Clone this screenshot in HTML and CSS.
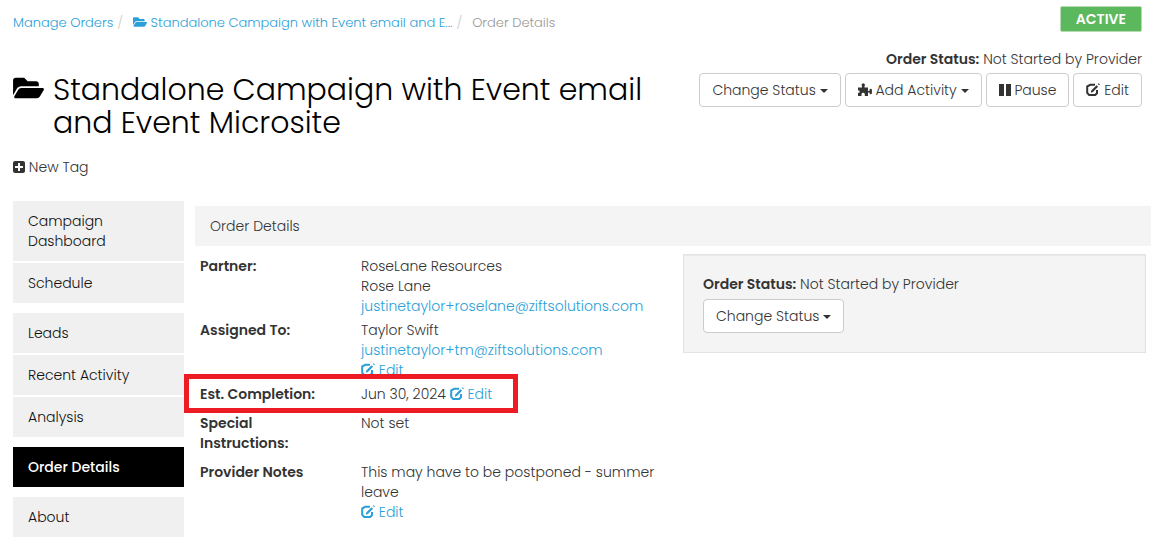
FILE: index.html
```html
<!DOCTYPE html>
<html lang="en">
<head>
    <meta charset="UTF-8">
    <meta name="viewport" content="width=device-width, initial-scale=1.0">
    <title>Order Details</title>
    <link rel="stylesheet" href="styles.css">
</head>
<body>

<!-- shared icons -->
<svg class="sprite" aria-hidden="true">
    <symbol id="icon-folder" viewBox="0 0 576 448">
        <path d="M572.7 260.1L500.3 384.2A64 64 0 0 1 445 416H45c-18.500 0-30-20.100-20.700-36.100l72.400-124.100A64 64 0 0 1 152 224h400c18.500 0 30 20.100 20.700 36.100zM152 192h328v-48c0-26.500-21.500-48-48-48H272l-64-64H48C21.500 32 0 53.500 0 80v278l69.100-118.400C86.200 210.200 118 192 152 192z"/>
    </symbol>
    <symbol id="icon-edit" viewBox="0 0 14 14">
        <path d="M9 1.700H4.500L1.200 3.500v6.300l2 2.200h6l1.800-1.700V7" fill="none" stroke="currentColor" stroke-width="2" stroke-linejoin="round"/>
        <path d="M4.800 9.800l.5-2.300 5.200-5.300 1.600 1.600-5.200 5.300zM11.800.9l.9-.7 1.200 1.200-.8.9z"/>
    </symbol>
</svg>

<header class="page-header">
    <div class="header-main">
        <ol class="breadcrumb">
            <li><a href="#">Manage Orders</a></li>
            <li><a href="#"><svg class="icon icon-folder"><use href="#icon-folder"/></svg> Standalone Campaign with Event email and E...</a></li>
            <li class="current">Order Details</li>
        </ol>
        <h1>
            <svg class="title-icon"><use href="#icon-folder"/></svg>
            <span>Standalone Campaign with Event email and Event Microsite</span>
        </h1>
        <button type="button" class="new-tag">
            <svg class="icon-plus" viewBox="0 0 12 12"><rect width="12" height="12" rx="2"/><path d="M6 2v8M2 6h8" stroke="#fff" stroke-width="2"/></svg>
            New Tag
        </button>
    </div>
    <div class="header-side">
        <span class="badge">ACTIVE</span>
        <p class="status"><strong>Order Status:</strong> Not Started by Provider</p>
        <div class="actions">
            <button type="button" class="btn">Change Status <span class="caret"></span></button>
            <button type="button" class="btn">
                <svg class="icon" viewBox="0 0 14 14"><path d="M0 4.500h4V3a1.600 1.600 0 1 1 2.500 0v1.500H10V8h1.500V7a1.200 1.200 0 0 1 2.400 0v3a1.200 1.200 0 0 1-2.400 0V9.500H10V13H6.800v-2a1.700 1.700 0 0 0-3.300 0v2H0V9.800h1.500V7.500H0z"/></svg>
                Add Activity <span class="caret"></span>
            </button>
            <button type="button" class="btn"><svg class="icon-pause" viewBox="0 0 12 12"><path d="M0 0h5v12H0zM7 0h5v12H7z"/></svg> Pause</button>
            <button type="button" class="btn"><svg class="icon"><use href="#icon-edit"/></svg> Edit</button>
        </div>
    </div>
</header>

<div class="layout">
    <nav class="sidebar">
        <div class="nav-group">
            <a href="#">Campaign Dashboard</a>
            <a href="#">Schedule</a>
        </div>
        <div class="nav-group">
            <a href="#">Leads</a>
            <a href="#">Recent Activity</a>
            <a href="#">Analysis</a>
        </div>
        <div class="nav-group">
            <a href="#" class="active">Order Details</a>
        </div>
        <div class="nav-group">
            <a href="#">About</a>
        </div>
    </nav>

    <main class="content">
        <h2>Order Details</h2>
        <div class="columns">
            <dl class="details">
                <div class="row">
                    <dt>Partner:</dt>
                    <dd>RoseLane Resources<br>Rose Lane<br><a href="#">justinetaylor+roselane@ziftsolutions.com</a></dd>
                </div>
                <div class="row">
                    <dt>Assigned To:</dt>
                    <dd>Taylor Swift<br><a href="#">justinetaylor+tm@ziftsolutions.com</a><br><a href="#"><svg class="icon"><use href="#icon-edit"/></svg> Edit</a></dd>
                </div>
                <div class="row highlight">
                    <dt>Est. Completion:</dt>
                    <dd>Jun 30, 2024 <a href="#"><svg class="icon"><use href="#icon-edit"/></svg> Edit</a></dd>
                </div>
                <div class="row spaced">
                    <dt>Special Instructions:</dt>
                    <dd>Not set</dd>
                </div>
                <div class="row spaced">
                    <dt>Provider Notes</dt>
                    <dd>This may have to be postponed - summer leave<br><a href="#"><svg class="icon"><use href="#icon-edit"/></svg> Edit</a></dd>
                </div>
            </dl>
            <aside class="well">
                <p class="status"><strong>Order Status:</strong> Not Started by Provider</p>
                <button type="button" class="btn">Change Status <span class="caret"></span></button>
            </aside>
        </div>
    </main>
</div>

</body>
</html>
```
FILE: styles.css
```css
*, *::before, *::after {
    box-sizing: border-box;
}

body {
    margin: 0;
    font-family: Poppins, Inter, "Liberation Sans", sans-serif;
    font-size: 14px;
    font-weight: 300;
    line-height: 20px;
    color: #333;
    background: #fff;
}

h1, h2, p, ol, dl, dd {
    margin: 0;
    padding: 0;
    font-weight: 300;
}

a {
    color: #2a9fd8;
    text-decoration: none;
}

strong, dt {
    font-weight: 600;
}

button {
    font: inherit;
    color: inherit;
    cursor: pointer;
}

svg {
    fill: currentColor;
}

.sprite {
    display: none;
}

.icon {
    width: 14px;
    height: 14px;
    vertical-align: -2px;
}

/* header */
.page-header {
    display: flex;
    justify-content: space-between;
    padding: 6px 15px 0 13px;
}

.header-main {
    flex: 1;
    max-width: 660px;
}

.breadcrumb {
    display: flex;
    list-style: none;
    font-size: 13px;
    padding-top: 7px;
    white-space: nowrap;
}

.breadcrumb li + li::before {
    content: "/";
    color: #ccc;
    padding: 0 10px 0 4px;
}

.breadcrumb .current {
    color: #999;
}

h1 {
    display: flex;
    gap: 9px;
    margin-top: 40px;
    font-size: 30px;
    line-height: 33px;
    color: #000;
}

.title-icon {
    flex: none;
    width: 31px;
    height: 24px;
    margin-top: 3px;
}

.new-tag {
    display: block;
    margin-top: 18px;
    padding: 0;
    border: 0;
    background: none;
}

.icon-plus, .icon-pause {
    width: 12px;
    height: 12px;
    vertical-align: -1px;
}

.header-side {
    display: flex;
    flex-direction: column;
    align-items: flex-end;
}

.badge {
    padding: 1px 15px;
    border: 1px solid #b5dbb5;
    border-radius: 2px;
    line-height: 22px;
    font-weight: 600;
    color: #fff;
    background: #5cb85c;
}

.header-side .status {
    margin-top: 17px;
}

.actions {
    display: flex;
    gap: 4px;
    margin-top: 4px;
}

.btn {
    padding: 6px 12px;
    border: 1px solid #ccc;
    border-radius: 4px;
    background: #fff;
    white-space: nowrap;
}

.caret {
    display: inline-block;
    border: 4px solid transparent;
    border-top-color: #333;
    border-bottom: 0;
    vertical-align: middle;
}

/* side menu and content */
.layout {
    display: grid;
    grid-template-columns: 171px 1fr;
    gap: 11px;
    padding: 24px 6px 15px 13px;
}

.nav-group {
    display: flex;
    flex-direction: column;
    gap: 2px;
    margin-bottom: 10px;
}

.nav-group a {
    padding: 10px 50px 10px 15px;
    color: #111;
    background: #f0f0f0;
}

.nav-group .active {
    color: #fff;
    font-weight: 500;
    background: #000;
}

.content {
    padding-top: 5px;
}

h2 {
    padding: 10px 15px;
    font-size: 14px;
    background: #f4f4f4;
}

.columns {
    display: grid;
    grid-template-columns: 1fr 1fr;
    align-items: start;
    gap: 20px;
    padding: 8px 5px 0;
}

.details {
    padding-top: 2px;
}

.row {
    display: grid;
    grid-template-columns: 141px 1fr;
    gap: 20px;
    margin-bottom: 4px;
}

.spaced {
    margin: 9px 0;
}

/* red frame drawn over the row */
.highlight {
    position: relative;
}

.highlight::after {
    content: "";
    position: absolute;
    top: -10px;
    left: -16px;
    width: 334px;
    height: 39px;
    border: 5px solid #ed1c24;
    pointer-events: none;
}

.well {
    padding: 19px;
    border: 1px solid #e3e3e3;
    background: #f4f4f4;
    box-shadow: inset 0 1px 1px rgba(0, 0, 0, 0.05);
}

.well .btn {
    margin-top: 5px;
}
```
